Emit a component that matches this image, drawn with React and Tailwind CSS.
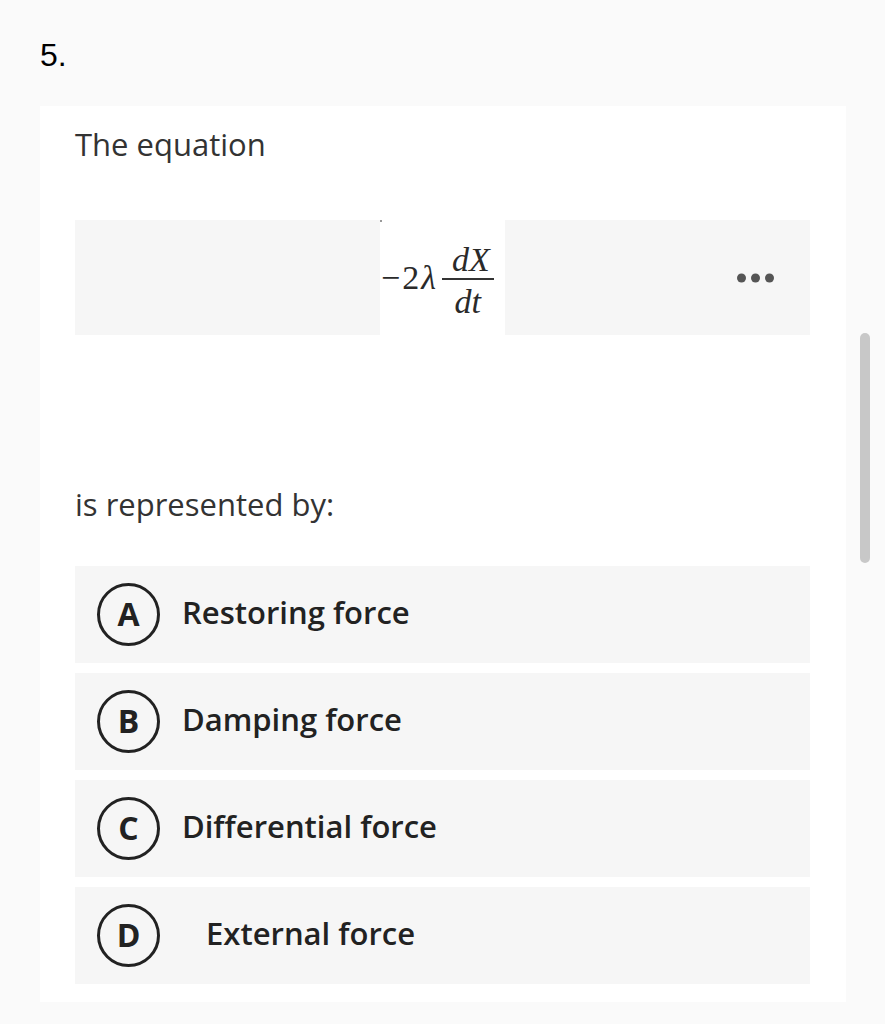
import React from "react";

const options = [
  { letter: "A", text: "Restoring force", indent: false },
  { letter: "B", text: "Damping force", indent: false },
  { letter: "C", text: "Differential force", indent: false },
  { letter: "D", text: "External force", indent: true },
];

export default function App() {
  return (
    <div className="relative min-h-screen bg-[#fafafa] pl-[40px] pr-[39px] pt-[39px] pb-[21px]">
      <div className="text-[32px] leading-none text-black" style={{ fontFamily: '"Liberation Sans", Arial, sans-serif' }}>
        5.
      </div>
      <div
        className="mt-[35px] bg-white pl-[35px] pr-[36px] pt-[18px] pb-[18px] text-[#333]"
        style={{ fontFamily: '"Open Sans", sans-serif' }}
      >
        <div className="text-[31px] leading-[40px]">The equation</div>
        <div className="relative mt-[56px] flex h-[115px] justify-center bg-[#f6f6f6]">
          <div
            className="relative flex w-[125px] items-center bg-white pl-[1px] text-[#2a2a2a]"
            style={{ fontFamily: '"Liberation Serif", "Times New Roman", serif' }}
          >
            <span className="absolute left-0 top-0 h-[2px] w-[2px] bg-[#999]" />
            <span className="text-[34px] leading-[30px] tracking-[2px]">−2<i>λ</i></span>
            <span className="ml-[4px] mt-[7px] inline-flex flex-col items-center text-[34px] italic leading-[30px]">
              <span className="border-b-[2px] border-[#333] pl-[10px] pr-[4px] pb-[3px]">dX</span>
              <span className="pt-[7px]">dt</span>
            </span>
          </div>
          <div className="absolute right-[36px] top-1/2 flex -translate-y-1/2 gap-[5px]">
            <span className="h-[9px] w-[9px] rounded-full bg-[#555]" />
            <span className="h-[9px] w-[9px] rounded-full bg-[#555]" />
            <span className="h-[9px] w-[9px] rounded-full bg-[#555]" />
          </div>
        </div>
        <div className="mt-[149px] text-[31px] leading-[40px]">is represented by:</div>
        <div className="mt-[42px] flex flex-col gap-[10px]">
          {options.map((o) => (
            <div key={o.letter} className="flex h-[97px] items-center bg-[#f6f6f6] pl-[22px]">
              <div className="flex h-[63px] w-[63px] shrink-0 items-center justify-center rounded-full border-[3px] border-[#222] pb-[1px] text-[32px] font-bold text-[#222]">
                {o.letter}
              </div>
              <div className={`pb-[4px] text-[31px] font-semibold text-[#222] ${o.indent ? "ml-[46px]" : "ml-[22px]"}`}>
                {o.text}
              </div>
            </div>
          ))}
        </div>
      </div>
      <div className="absolute left-[860px] top-[333px] h-[230px] w-[10px] rounded-full bg-[#c8c8c8]" />
    </div>
  );
}
